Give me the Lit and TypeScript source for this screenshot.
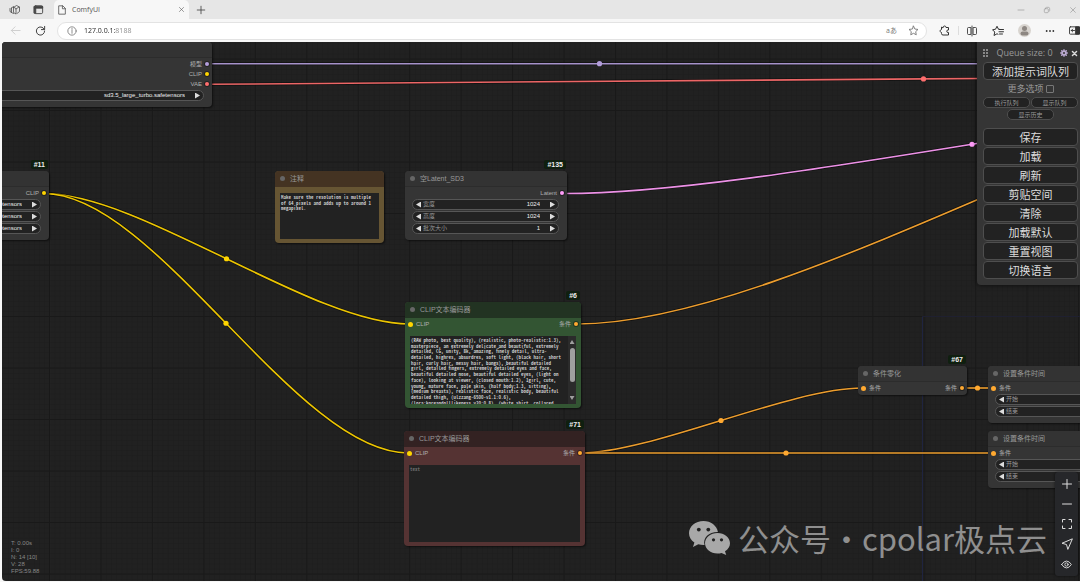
import { LitElement, html, svg, css, nothing } from "lit";
import { customElement, state } from "lit/decorators.js";
import { classMap } from "lit/directives/class-map.js";
import { styleMap } from "lit/directives/style-map.js";

interface Widget {
  kind: "number" | "combo";
  label?: string;
  value: string;
}

interface GraphNode {
  id: string;
  badge?: string;
  title: string;
  tone?: "note" | "green" | "red";
  x: number;
  y: number;
  width: number;
  rows?: { input?: [string, string]; output?: [string, string] }[];
  widgets?: Widget[];
  text?: { value: string; placeholder: string; height: number; scroll?: boolean };
}

const YELLOW = "#ffd500";
const ORANGE = "#ffa931";
const PURPLE = "#b39ddb";
const RED = "#ff6e6e";
const PINK = "#ff9cf9";

const PROMPT = `(RAW photo, best quality), (realistic, photo-realistic:1.3),
masterpiece, an extremely delicate and beautiful, extremely
detailed, CG, unity, 8k, amazing, finely detail, ultra-
detailed, highres, absurdres, soft light, (black hair, short
hair, curly hair, messy hair, bangs), beautiful detailed
girl, detailed fingers, extremely detailed eyes and face,
beautiful detailed nose, beautiful detailed eyes, (light on
face), looking at viewer, (closed mouth:1.2), 1girl, cute,
young, mature face, pale skin, (half body:1.3, sitting),
(medium breasts), realistic face, realistic body, beautiful
detailed thigh, (ulzzang-6500-v1.1:0.6),
(lora:koreandolllikeness_v20:0.8), (white shirt, collared`;

const NOTE = `Make sure the resolution is multiple
of 64 pixels and adds up to around 1
megapixel.`;

const NODES: GraphNode[] = [
  {
    id: "loader", title: "", x: -60, y: 0, width: 270,
    rows: [
      { output: ["模型", PURPLE] },
      { output: ["CLIP", YELLOW] },
      { output: ["VAE", RED] },
    ],
    widgets: [{ kind: "combo", value: "sd3.5_large_turbo.safetensors" }],
  },
  {
    id: "clips", badge: "#11", title: "", x: -110, y: 129, width: 157,
    rows: [{ output: ["CLIP", YELLOW] }],
    widgets: [
      { kind: "combo", value: "clip_g.safetensors" },
      { kind: "combo", value: "clip_l.safetensors" },
      { kind: "combo", value: "t5xxl_fp16.safetensors" },
    ],
  },
  {
    id: "note", title: "注释", tone: "note", x: 273, y: 129, width: 109,
    text: { value: NOTE, placeholder: "", height: 46 },
  },
  {
    id: "latent", badge: "#135", title: "空Latent_SD3", x: 403, y: 129, width: 162,
    rows: [{ output: ["Latent", PINK] }],
    widgets: [
      { kind: "number", label: "宽度", value: "1024" },
      { kind: "number", label: "高度", value: "1024" },
      { kind: "number", label: "批次大小", value: "1" },
    ],
  },
  {
    id: "positive", badge: "#6", title: "CLIP文本编码器", tone: "green", x: 403, y: 260, width: 176,
    rows: [{ input: ["CLIP", YELLOW], output: ["条件", ORANGE] }],
    text: { value: PROMPT, placeholder: "text", height: 68, scroll: true },
  },
  {
    id: "negative", badge: "#71", title: "CLIP文本编码器", tone: "red", x: 402, y: 389, width: 181,
    rows: [{ input: ["CLIP", YELLOW], output: ["条件", ORANGE] }],
    text: { value: "", placeholder: "text", height: 77 },
  },
  {
    id: "zero", badge: "#67", title: "条件零化", x: 856, y: 324, width: 109,
    rows: [{ input: ["条件", ORANGE], output: ["条件", ORANGE] }],
  },
  {
    id: "range-a", title: "设置条件时间", x: 986, y: 324, width: 162,
    rows: [{ input: ["条件", ORANGE] }],
    widgets: [
      { kind: "number", label: "开始", value: "" },
      { kind: "number", label: "结束", value: "" },
    ],
  },
  {
    id: "range-b", title: "设置条件时间", x: 986, y: 389, width: 162,
    rows: [{ input: ["条件", ORANGE] }],
    widgets: [
      { kind: "number", label: "开始", value: "" },
      { kind: "number", label: "结束", value: "" },
    ],
  },
];

/* from x, from y, to x, to y, colour */
const LINKS: [number, number, number, number, string][] = [
  [205, 21.7, 990, 21.7, PURPLE],
  [205, 42.3, 1638, 31.5, RED],
  [562, 151.5, 1378, 53, PINK],
  [575, 282, 1421, 14, ORANGE],
  [578, 411, 860, 346, ORANGE],
  [578, 411, 990, 411, ORANGE],
  [960, 346, 991, 346, ORANGE],
  [42, 151.5, 407, 282, YELLOW],
  [42, 151.5, 406, 411, YELLOW],
];

const MENU = ["保存", "加载", "刷新", "剪贴空间", "清除", "加载默认", "重置视图", "切换语言"];

const glyph = (paths: unknown, size = 12, box = 24) => html`
  <svg class="glyph" width=${size} height=${size} viewBox="0 0 ${box} ${box}" aria-hidden="true">${paths}</svg>
`;

const ICONS = {
  workspaces: svg`<path d="M9 7l6-4 6 3v9l-5 4M9 7v10l5 3V10zM14 10l6-4M5 8l4-3M5 8v9l4 2M2 9v6l3 2" stroke-width="1.500"/>`,
  tabs: svg`<rect x="3" y="4" width="18" height="17" rx="3"/><path d="M3 5h18v4H3zM3 9h3v11H3z" fill="currentColor"/>`,
  page: svg`<path d="M5 2h9l6 6v14H5zM13 2v7h7"/>`,
  close: svg`<path d="M5 5l14 14M19 5L5 19"/>`,
  plus: svg`<path d="M12 3v18M3 12h18"/>`,
  minus: svg`<path d="M3 12h18"/>`,
  restore: svg`<rect x="4" y="8" width="12" height="12" rx="3"/><path d="M8 5q1-1 3-1h5q4 0 4 4v5q0 2-1 3"/>`,
  back: svg`<path d="M22 12H3M11 4l-8 8 8 8"/>`,
  reload: svg`<path d="M20 9A9 9 0 1 0 21 13M21 3v7h-7"/>`,
  info: svg`<circle cx="12" cy="12" r="10"/><path d="M12 10.500v7M12 6v2"/>`,
  star: svg`<path d="M12 2.500l3 6.300 6.800.9-5 4.800 1.200 6.900-6-3.300-6 3.300 1.200-6.900-5-4.800 6.800-.9z"/>`,
  puzzle: svg`<path d="M8 5a3 3 0 0 1 6 0h5v5h-1a2.500 2.500 0 0 0 0 5h1v5H8q-3 0-3-3v-2a3 3 0 0 1-2-5l2-1V5z"/>`,
  split: svg`<path d="M9 5H5q-2 0-2 2v10q0 2 2 2h4zM15 5h4q2 0 2 2v10q0 2-2 2h-4zM12 2v20" stroke-width="1.700"/>`,
  favs: svg`<path d="M14 8l-1.500-.2L10 2.500 7 8.500l-6 1 4.500 4.500L4 21l6-3.500 2 1M14 9h9M14 13.500h9M15 18h6"/>`,
  more: svg`<g fill="currentColor" stroke="none"><circle cx="4" cy="12" r="2.200"/><circle cx="12" cy="12" r="2.200"/><circle cx="20" cy="12" r="2.200"/></g>`,
  sidebar: svg`<rect x="1" y="4" width="22" height="16" rx="2"/><path d="M15 4h8v16h-8z" fill="currentColor"/><path d="M12 12H5M8 9l-3 3 3 3"/>`,
  gear: svg`<path d="M12 2v20M2 12h20M5 5l14 14M19 5L5 19" stroke-width="4"/><circle cx="12" cy="12" r="5.500" stroke-width="5"/><circle cx="12" cy="12" r="3" fill="#353535" stroke="none"/>`,
  frame: svg`<path d="M3 8V3h5M16 3h5v5M21 16v5h-5M8 21H3v-5"/>`,
  send: svg`<path d="M22 2L2 10.500l9 2.500 2.500 9z"/>`,
  eye: svg`<path d="M1.500 12Q6 4.500 12 4.500T22.500 12Q18 19.500 12 19.500T1.500 12z"/><circle cx="12" cy="12" r="3.600"/>`,
};

@customElement("app-root")
export class AppRoot extends LitElement {
  @state() private extra = false;

  static styles = css`
    :host {
      display: flex;
      flex-direction: column;
      height: 100vh;
      overflow: hidden;
      background: #f7f7f7;
      font-family: "Liberation Sans", "Noto Sans CJK SC", sans-serif;
      --ui: "Open Sans", "Noto Sans CJK SC", sans-serif;
    }
    *, *::before, *::after { box-sizing: border-box; }
    button, input, textarea, select {
      margin: 0; padding: 0; border: 0; background: none;
      font: inherit; color: inherit; outline: none; min-width: 0;
    }
    button { display: flex; align-items: center; justify-content: center; }
    .glyph {
      display: block; flex: none; fill: none; stroke: currentColor;
      stroke-width: 2; stroke-linecap: round; stroke-linejoin: round;
    }

    /* browser chrome */
    .tabbar {
      display: flex; align-items: center; height: 19px; flex: none;
      background: #e6e6e6; color: #444; font: 7px/18px var(--ui);
    }
    .tabtools { display: flex; gap: 12px; width: 54px; padding-left: 9px; }
    .tab {
      display: flex; align-items: center; gap: 5px; width: 135px; height: 19px;
      padding: 0 4px 0 3px; background: #f7f7f7; border-radius: 5px 5px 0 0; color: #555;
    }
    .tab .name { flex: 1; }
    .newtab { margin-left: 7px; }
    .wincontrols { display: flex; gap: 18px; margin-left: auto; padding-right: 3px; color: #999; }
    .toolbar {
      display: flex; align-items: center; height: 23px; flex: none;
      background: #f7f7f7; color: #333;
    }
    .nav { display: flex; gap: 14px; width: 57px; padding-left: 10px; }
    .nav .off { color: #ccc; }
    .address {
      display: flex; align-items: center; gap: 7px; flex: 1; height: 18px;
      padding: 0 7px 0 9px; background: #fff; border: 1px solid #e3e3e3; border-radius: 9px; color: #777;
    }
    .address input {
      flex: 1; height: 12px; font: 7px/12px var(--ui);
      color: transparent; background: linear-gradient(90deg, #222 31px, #888 31px);
      -webkit-background-clip: text; background-clip: text;
    }
    .lang { font: 7px/12px var(--ui); margin-right: 4px; }
    .actions { display: flex; align-items: center; gap: 14px; padding: 0 0 0 12px; }
    .actions .sep { width: 1px; height: 9px; background: #ddd; margin: 0 -7px; }
    .avatar { fill: #8d8782; stroke: none; }

    /* graph canvas */
    .canvas {
      position: relative; flex: 1; min-height: 0; margin: 0 0 1px 2px; overflow: hidden;
      background: #212121; border-radius: 4px 0 0 4px;
      color: #999;
    }
    .wires { position: absolute; inset: 0; width: 100%; height: 100%; }
    .node {
      position: absolute; display: flex; flex-direction: column;
      background: #353535; border-radius: 4px; box-shadow: 1px 1px 2px rgb(0 0 0 / 55%);
      padding-bottom: 2px;
    }
    .node.widgety { padding-bottom: 6px; }
    .node header {
      display: flex; align-items: center; gap: 5px; height: 16px; padding-left: 5px;
      background: #333; border-bottom: 1px solid #2c2c2c; border-radius: 4px 4px 0 0;
      font-size: 7px; line-height: 15px; color: #999; white-space: nowrap;
    }
    .node header::before { content: ""; width: 5px; height: 5px; border-radius: 50%; background: #666; }
    .node.plain header::before { visibility: hidden; }
    .node.note { background: #665533; }
    .node.note header { background: #443322; border-color: #443322; }
    .node.green { background: #335533; }
    .node.green header { background: #223322; border-color: #223322; }
    .node.red { background: #553333; }
    .node.red header { background: #332222; border-color: #332222; }
    .node.texty { padding-bottom: 4px; }
    .badge {
      position: absolute; right: 1px; bottom: 100%; margin-bottom: 2px; height: 9px;
      padding: 0 3px; border-radius: 2px; background: #0f1f0f; color: #eee;
      font: bold 7px/9px "Liberation Sans", sans-serif;
    }
    .slots { display: flex; flex-direction: column; padding: 1px 3px 0; }
    .slot { display: flex; justify-content: space-between; height: 10px; font-size: 6px; line-height: 10px; color: #b0b0b0; }
    .port { display: flex; align-items: center; gap: 3px; }
    .port.out { flex-direction: row-reverse; margin-left: auto; }
    .pin { width: 5px; height: 5px; border-radius: 50%; }
    .port.out .pin { width: 4px; height: 4px; box-shadow: 0 0 0 1px rgb(0 0 0 / 35%); }
    .widgets { display: flex; flex-direction: column; gap: 1px; padding: 1px 8px 0 7px; }
    .widget {
      display: flex; align-items: center; height: 11px; padding: 0 3px; gap: 2px;
      border: 1px solid #565656; border-radius: 6px; background: #222;
      font-size: 6px; line-height: 9px; color: #999;
    }
    .widget input, .widget select {
      appearance: none; flex: 1; width: 0; height: 9px; margin-right: 8px;
      text-align: right; text-align-last: right; color: #eee; line-height: 9px;
    }
    .tri { width: 5px; height: 6px; background: #ddd; clip-path: polygon(0 0, 100% 50%, 0 100%); }
    .tri.prev { clip-path: polygon(100% 0, 0 50%, 100% 100%); }
    .prose { display: flex; margin: 6px 5px 0; background: #222; }
    .gapped .prose { margin-top: 7px; }
    .prose textarea {
      display: block; flex: 1; resize: none; padding: 1px; overflow: hidden; white-space: pre;
      font-family: "Noto Sans CJK SC", sans-serif; font-feature-settings: "hwid" 1;
      font-size: 5px; line-height: 1.14; font-weight: 500; color: #ddd;
    }
    .prose textarea::placeholder { color: #777; opacity: 1; }
    .scroll {
      display: flex; flex-direction: column; align-items: center; width: 8px;
      padding: 4px 0; background: #2b2b2b;
    }
    .scroll i { width: 5px; height: 4px; background: #9f9f9f; clip-path: polygon(50% 0, 100% 100%, 0 100%); }
    .scroll i.down { clip-path: polygon(0 0, 100% 0, 50% 100%); margin-top: auto; }
    .scroll b { width: 5px; height: 34px; margin-top: 4px; border-radius: 3px; background: #9f9f9f; }

    .stats {
      position: absolute; left: 9px; bottom: 6px; margin: 0; padding: 0; list-style: none;
      font-size: 6px; line-height: 7px; color: #888;
    }

    /* floating queue menu */
    .menu {
      position: absolute; top: 0; right: 0; width: 103px; padding: 4px 2px 6px 6px;
      display: flex; flex-direction: column; gap: 1px;
      background: #353535; border-radius: 0 0 0 4px; box-shadow: 0 0 5px rgb(0 0 0 / 60%);
      font-family: "Noto Sans CJK SC", sans-serif; color: #999;
    }
    .menu .head { display: flex; align-items: center; height: 14px; margin-bottom: 1px; font: 9px/14px var(--ui); }
    .menu .head .size { flex: 1; text-align: center; }
    .menu .head button { color: #b9a9d0; margin-right: 3px; }
    .menu .head button + button { color: #ddd; margin-right: 0; }
    .grip { width: 6px; height: 9px; background: radial-gradient(circle at 1px 1px, #888 1px, transparent 1px) 0 0 / 3px 3px; }
    .menu .item {
      height: 18px; border: 1px solid #4e4e4e; border-radius: 4px; background: #222;
      color: #ddd; font-size: 11px; line-height: 16px;
    }
    .menu .more { display: flex; align-items: center; justify-content: center; gap: 2px; height: 15px; font-size: 9px; line-height: 15px; }
    .menu .more input { appearance: none; width: 8px; height: 8px; border: 1px solid #777; border-radius: 1px; }
    .pair { display: flex; flex-wrap: wrap; justify-content: center; gap: 1px; margin-bottom: 7px; }
    .pair button {
      width: 47px; height: 11px; border: 1px solid #4e4e4e; border-radius: 5px;
      background: #222; color: #999; font-size: 6px; line-height: 9px;
    }

    .zoombar {
      position: absolute; right: 2px; bottom: 5px; width: 23px; padding: 2px 0;
      display: flex; flex-direction: column; background: #26272a;
      border-radius: 3px; box-shadow: 0 0 3px rgb(0 0 0 / 60%); color: #ddd;
    }
    .zoombar button { height: 20px; width: 100%; }

    .brand {
      position: absolute; right: 33px; bottom: 20px; display: flex; align-items: center; gap: 8px;
      font: 31px/46px "Noto Sans CJK SC", sans-serif; color: #8f8f8f; white-space: nowrap;
    }
  `;

  private wire([x1, y1, x2, y2, color]: [number, number, number, number, string]) {
    const reach = Math.hypot(x2 - x1, y2 - y1) / 4;
    const d = `M${x1} ${y1}C${x1 + reach} ${y1} ${x2 - reach} ${y2} ${x2} ${y2}`;
    return svg`
      <path d=${d} fill="none" stroke="#000" stroke-opacity=".5" stroke-width="3"></path>
      <path d=${d} fill="none" stroke=${color} stroke-width="1.600" stroke-opacity=".92"></path>
      <circle cx=${(x1 + x2) / 2} cy=${(y1 + y2) / 2} r="2.600" fill=${color}></circle>`;
  }

  private widget(w: Widget, nodeId: string, index: number) {
    const id = `${nodeId}-${index}`;
    if (w.kind === "combo") {
      return html`<div class="widget">
        <select id=${id} aria-label="model"><option>${w.value}</option></select>
        <span class="tri"></span>
      </div>`;
    }
    return html`<div class="widget">
      <button class="tri prev" aria-label="decrease"></button>
      <label for=${id}>${w.label}</label>
      <input id=${id} .value=${w.value} />
      <button class="tri" aria-label="increase"></button>
    </div>`;
  }

  private port(side: "in" | "out", slot?: [string, string]) {
    if (!slot) return nothing;
    return html`<span class="port ${side}">
      <span class="pin" style=${styleMap({ backgroundColor: slot[1] })}></span>${slot[0]}
    </span>`;
  }

  private node(n: GraphNode) {
    const classes = {
      node: true,
      plain: !n.title,
      texty: !!n.text,
      widgety: !!n.widgets,
      gapped: !!n.text && !!n.rows,
      [n.tone ?? "base"]: true,
    };
    return html`<section
      class=${classMap(classes)}
      style=${styleMap({ left: `${n.x}px`, top: `${n.y}px`, width: `${n.width}px` })}
    >
      ${n.badge ? html`<span class="badge">${n.badge}</span>` : nothing}
      <header>${n.title}</header>
      ${n.rows
        ? html`<div class="slots">
            ${n.rows.map((r) => html`<div class="slot">${this.port("in", r.input)}${this.port("out", r.output)}</div>`)}
          </div>`
        : nothing}
      ${n.widgets ? html`<div class="widgets">${n.widgets.map((w, i) => this.widget(w, n.id, i))}</div>` : nothing}
      ${n.text
        ? html`<div class="prose" style=${styleMap({ height: `${n.text.height}px` })}>
            <textarea aria-label=${n.title} spellcheck="false" placeholder=${n.text.placeholder} .value=${n.text.value}></textarea>
            ${n.text.scroll ? html`<div class="scroll"><i></i><b></b><i class="down"></i></div>` : nothing}
          </div>`
        : nothing}
    </section>`;
  }

  private chrome() {
    return html`
      <div class="tabbar">
        <div class="tabtools">
          <button aria-label="Workspaces">${glyph(ICONS.workspaces, 12)}</button>
          <button aria-label="Tab actions">${glyph(ICONS.tabs, 11)}</button>
        </div>
        <div class="tab">
          ${glyph(ICONS.page, 10)}<span class="name">ComfyUI</span>
          <button aria-label="Close tab">${glyph(ICONS.close, 7)}</button>
        </div>
        <button class="newtab" aria-label="New tab">${glyph(ICONS.plus, 10)}</button>
        <div class="wincontrols">
          <button aria-label="Minimize">${glyph(ICONS.minus, 8)}</button>
          <button aria-label="Restore">${glyph(ICONS.restore, 8)}</button>
          <button aria-label="Close">${glyph(ICONS.close, 8)}</button>
        </div>
      </div>
      <div class="toolbar">
        <div class="nav">
          <button class="off" aria-label="Back">${glyph(ICONS.back, 11)}</button>
          <button aria-label="Reload">${glyph(ICONS.reload, 11)}</button>
        </div>
        <div class="address">
          ${glyph(ICONS.info, 10)}
          <input aria-label="Address" .value=${"127.0.0.1:8188"} />
          <span class="lang">aあ</span>
          <button aria-label="Favorite">${glyph(ICONS.star, 11)}</button>
        </div>
        <div class="actions">
          <button aria-label="Extensions">${glyph(ICONS.puzzle, 12)}</button>
          <span class="sep"></span>
          <button aria-label="Split screen">${glyph(ICONS.split, 12)}</button>
          <button aria-label="Favorites">${glyph(ICONS.favs, 12)}</button>
          <button aria-label="Profile">
            <svg width="13" height="13" viewBox="0 0 26 26" class="avatar">
              <circle cx="13" cy="13" r="13" fill="#d8d4cf"></circle>
              <circle cx="13" cy="9" r="5"></circle>
              <rect x="5" y="15" width="16" height="8" rx="4"></rect>
            </svg>
          </button>
          <button aria-label="More">${glyph(ICONS.more, 10)}</button>
          <button aria-label="Sidebar">${glyph(ICONS.sidebar, 11)}</button>
        </div>
      </div>
    `;
  }

  render() {
    return html`
      ${this.chrome()}
      <main class="canvas">
        <svg class="wires" aria-hidden="true">
          <defs>
            <pattern id="minor" width="5.150" height="5.150" patternUnits="userSpaceOnUse" x="47.300" y="16.800">
              <path d="M0 0H5.150M0 0V5.150" stroke="#1c1c1c" stroke-width=".8"></path>
            </pattern>
            <pattern id="major" width="51.450" height="51.500" patternUnits="userSpaceOnUse" x="47" y="16.500">
              <path d="M.5 0V51.500M0 .5H51.500" stroke="#191919" stroke-width="1"></path>
            </pattern>
          </defs>
          <rect width="100%" height="100%" fill="url(#minor)"></rect>
          <rect width="100%" height="100%" fill="url(#major)"></rect>
          <path d="M920.500 275V540" stroke="#1f2440" stroke-width="1"></path>
          <path d="M920 274.500H1080" stroke="#1f2030" stroke-width="1"></path>
          ${LINKS.map((l) => this.wire(l))}
        </svg>
        ${NODES.map((n) => this.node(n))}
        <ul class="stats">
          <li>T: 0.00s</li>
          <li>I: 0</li>
          <li>N: 14 [10]</li>
          <li>V: 28</li>
          <li>FPS:59.88</li>
        </ul>
        <div class="brand">
          <svg width="41" height="34" viewBox="0 0 41 34" aria-hidden="true">
            <path fill="#a8a8a8" d="M14.500 0C6.500 0 0 5.300 0 12.200c0 3.900 2.100 7.200 5.400 9.400L4 26l5.300-2.700c1.700.5 3.400.8 5.200.8h1C13.600 16.500 20 10.700 28.900 10.900 27.800 4.600 21.800 0 14.500 0z"></path>
            <path fill="#a8a8a8" d="M28.500 12C21.600 12 16 16.600 16 22.300s5.600 10.300 12.500 10.300c1.400 0 2.800-.2 4-.6l4.700 2-1.200-3.700c3-1.900 5-4.700 5-8C41 16.600 35.400 12 28.500 12z"></path>
            <g fill="#212121">
              <circle cx="9.800" cy="8.600" r="1.900"></circle><circle cx="19.300" cy="8.600" r="1.900"></circle>
              <circle cx="24.500" cy="18.800" r="1.600"></circle><circle cx="32.500" cy="18.800" r="1.600"></circle>
            </g>
          </svg>
          <span>公众号·cpolar极点云</span>
        </div>
        <div class="zoombar">
          <button aria-label="Zoom in">${glyph(ICONS.plus, 12)}</button>
          <button aria-label="Zoom out">${glyph(ICONS.minus, 12)}</button>
          <button aria-label="Fit view">${glyph(ICONS.frame, 12)}</button>
          <button aria-label="Select mode">${glyph(ICONS.send, 12)}</button>
          <button aria-label="Toggle links">${glyph(ICONS.eye, 11)}</button>
        </div>
        <aside class="menu">
          <div class="head">
            <span class="grip"></span>
            <span class="size">Queue size: 0</span>
            <button aria-label="Settings">${glyph(ICONS.gear, 8)}</button>
            <button aria-label="Close menu">${glyph(svg`<path d="M5 5l14 14M19 5L5 19" stroke-width="5"/>`, 7)}</button>
          </div>
          <button class="item">添加提示词队列</button>
          <label class="more">更多选项<input type="checkbox" .checked=${this.extra}
            @change=${() => (this.extra = !this.extra)} /></label>
          <div class="pair">
            <button>执行队列</button><button>显示队列</button><button>显示历史</button>
          </div>
          ${MENU.map((m) => html`<button class="item">${m}</button>`)}
        </aside>
      </main>
    `;
  }
}
